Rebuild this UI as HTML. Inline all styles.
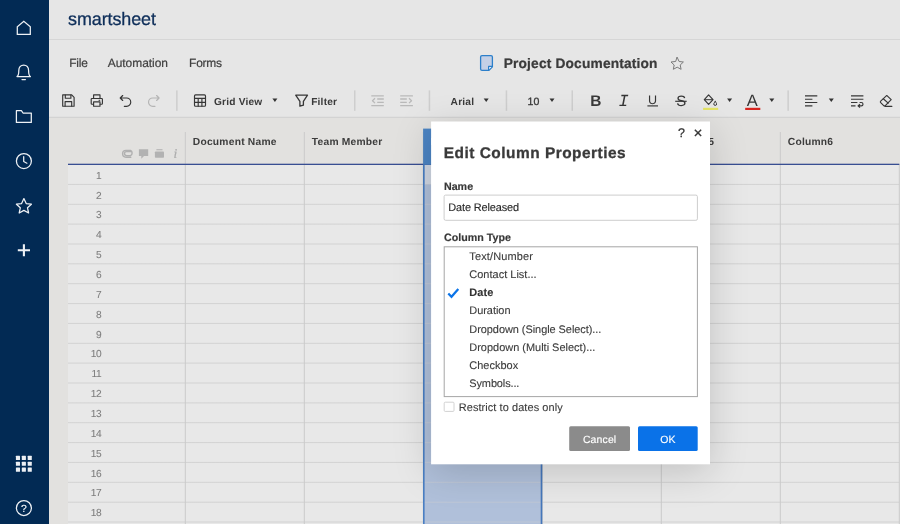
<!DOCTYPE html>
<html lang="en">
<head>
<meta charset="utf-8">
<title>Project Documentation - Smartsheet</title>
<style>
html{font-size:10px}
body{margin:0;width:900px;height:524px;overflow:hidden;background:#e6e6e6;font-family:"Liberation Sans",sans-serif}
#s{position:absolute;left:0;top:0;width:900rem;height:524rem;transform:scale(.1);transform-origin:0 0;overflow:hidden;will-change:transform}
#s div,#s span,#s svg{position:absolute;box-sizing:border-box}
#s{text-rendering:geometricPrecision}
.t{white-space:nowrap;line-height:1;color:#444}
.b{font-weight:bold}
/* chrome */
#side{left:0;top:0;width:49rem;height:524rem;background:#022a54}
#topline{left:49rem;top:39rem;width:851rem;height:1rem;background:#d6d6d6}
#tbline{left:49rem;top:116.8rem;width:851rem;height:1rem;background:#cbcbcb}
#gridbg{left:49rem;top:117.8rem;width:851rem;height:407rem;background:#e2e1df}
#rows{left:68rem;top:164.5rem;width:832rem;height:360rem;background:#e8e8e8}
.hl{left:68rem;width:831.3rem;height:1rem;background:linear-gradient(90deg,#d2d2d2 0,#d2d2d2 355rem,rgba(205,206,210,.5) 355rem,rgba(205,206,210,.5) 474.3rem,#d2d2d2 474.3rem)}
.vl{top:132rem;width:1rem;height:393rem;background:#cacaca}
#blue{left:68rem;top:163.7rem;width:831.3rem;height:1.25rem;background:#384e92}
.rn{left:71.3rem;width:30rem;text-align:right;font-size:10.2rem;letter-spacing:-.35rem;color:#7e7e7e;-webkit-text-stroke:.08rem #7e7e7e}
.ch{font-size:10.3rem;font-weight:bold;color:#3c3c3c;letter-spacing:.2rem}
.selb{top:164.8rem;width:1.6rem;height:360rem;background:#4a7fc3}
.sep{top:90.4rem;width:1.5rem;height:20.4rem;background:#cecece}
.tt{top:96.7rem;font-size:10.2rem;color:#3a3a3a;letter-spacing:.18rem}
.m{top:56.5rem;font-size:12rem;color:#404040;-webkit-text-stroke:.2rem #404040}
/* dialog */
.li{left:38.2rem;font-size:11rem;color:#3c3c3c;-webkit-text-stroke:.12rem #3c3c3c;letter-spacing:.05rem}
.bt{top:312.5rem;text-align:center;font-size:10.5rem;color:#fff;letter-spacing:.12rem;-webkit-text-stroke:.15rem #fff}
.lb{font-size:10.7rem;letter-spacing:.02rem;color:#383838;-webkit-text-stroke:.18rem #383838}
#dlg{left:431.1rem;top:121.5rem;width:278.9rem;height:342.8rem;background:#fff;box-shadow:0 8rem 36rem rgba(0,0,0,.17)}
</style>
</head>
<body>
<div id="s">
<div id="side"></div>
<svg id="sideic" style="left:0;top:0;width:49rem;height:524rem" viewBox="0 0 49 524" fill="none" stroke="#eef1f5" stroke-width="1.25" stroke-linejoin="round" stroke-linecap="round">
<path d="M17.3 34.3 V26.9 L23.8 21.3 L30.3 26.9 V34.3 Z" stroke-linejoin="miter"/>
<path d="M17 76.6 C18.6 75.4 18.8 73.4 18.8 70.4 C18.8 67.2 20.9 65 23.7 65 C26.5 65 28.6 67.2 28.6 70.4 C28.6 73.4 28.8 75.4 30.4 76.6 Z M22 79.6 H25.4"/>
<path d="M16.4 110.7 H21.4 L23 113 H31.3 V122.4 H16.4 Z"/>
<circle cx="23.9" cy="161.1" r="7.5"/>
<path d="M23.7 156.7 V161.5 L26.9 163.2"/>
<path d="M23.9 198.6 L26.2 203.6 L31.4 204.2 L27.5 207.8 L28.6 213 L23.9 210.4 L19.2 213 L20.3 207.8 L16.4 204.2 L21.6 203.6 Z"/>
<path d="M23.9 244.2 V256.2 M17.8 250.2 H30" stroke-width="2.1" stroke-linecap="butt"/>
<g fill="#eceff3" stroke="none">
<rect x="15.9" y="455.8" width="4.1" height="4.1" rx=".5"/><rect x="21.8" y="455.8" width="4.1" height="4.1" rx=".5"/><rect x="27.7" y="455.8" width="4.1" height="4.1" rx=".5"/>
<rect x="15.9" y="461.7" width="4.1" height="4.1" rx=".5"/><rect x="21.8" y="461.7" width="4.1" height="4.1" rx=".5"/><rect x="27.7" y="461.7" width="4.1" height="4.1" rx=".5"/>
<rect x="15.9" y="467.6" width="4.1" height="4.1" rx=".5"/><rect x="21.8" y="467.6" width="4.1" height="4.1" rx=".5"/><rect x="27.7" y="467.6" width="4.1" height="4.1" rx=".5"/>
</g>
<circle cx="23.9" cy="508" r="7.5"/>
</svg>
<div id="topline"></div>
<div class="t" id="logo" style="left:68rem;top:9.6rem;font-size:18rem;color:#0f2f5a;letter-spacing:-.12rem;-webkit-text-stroke:.3rem #0f2f5a">smartsheet</div>
<div class="t m" style="left:69.2rem;letter-spacing:-.22rem">File</div>
<div class="t m" style="left:107.7rem;letter-spacing:-.04rem">Automation</div>
<div class="t m" style="left:189.1rem;letter-spacing:-.28rem">Forms</div>
<div class="t b" id="title" style="left:503.7rem;top:56.2rem;font-size:13.8rem;letter-spacing:.14rem;color:#3b3b3b;-webkit-text-stroke:.25rem #3b3b3b">Project Documentation</div>
<div id="tbline"></div>
<div class="sep" style="left:176.1rem"></div>
<div class="sep" style="left:354rem"></div>
<div class="sep" style="left:428.7rem"></div>
<div class="sep" style="left:505.7rem"></div>
<div class="sep" style="left:571.5rem"></div>
<div class="sep" style="left:787.4rem"></div>
<div class="t b tt" style="left:214rem">Grid View</div>
<div class="t b tt" style="left:311.2rem">Filter</div>
<div class="t b tt" style="left:450.6rem">Arial</div>
<div class="t b tt" style="left:527.4rem;font-weight:normal;font-size:10.6rem;top:96.3rem;-webkit-text-stroke:.3rem #3a3a3a">10</div>
<div id="gridbg"></div>
<!--TB-->
<div id="rows"></div>
<div id="selc" style="left:423rem;top:164.8rem;width:119.3rem;height:360rem;background:rgba(60,110,190,.32)"></div>
<div id="selact" style="left:424.6rem;top:164.9rem;width:116.1rem;height:19.1rem;background:#d0d7e3"></div>
<div class="hl" style="top:183.90rem"></div>
<div class="hl" style="top:203.76rem"></div>
<div class="hl" style="top:223.62rem"></div>
<div class="hl" style="top:243.48rem"></div>
<div class="hl" style="top:263.34rem"></div>
<div class="hl" style="top:283.20rem"></div>
<div class="hl" style="top:303.06rem"></div>
<div class="hl" style="top:322.92rem"></div>
<div class="hl" style="top:342.78rem"></div>
<div class="hl" style="top:362.64rem"></div>
<div class="hl" style="top:382.50rem"></div>
<div class="hl" style="top:402.36rem"></div>
<div class="hl" style="top:422.22rem"></div>
<div class="hl" style="top:442.08rem"></div>
<div class="hl" style="top:461.94rem"></div>
<div class="hl" style="top:481.80rem"></div>
<div class="hl" style="top:501.66rem"></div>
<div class="hl" style="top:521.52rem"></div>
<div class="vl" style="left:184.8rem"></div>
<div class="vl" style="left:303.8rem"></div>
<div class="vl" style="left:422.8rem"></div>
<div class="vl" style="left:541.8rem"></div>
<div class="vl" style="left:660.8rem"></div>
<div class="vl" style="left:779.8rem"></div>
<div class="vl" style="left:898.8rem;top:164rem"></div>
<div id="blue"></div>
<div class="t rn" style="top:170.05rem">1</div>
<div class="t rn" style="top:189.91rem">2</div>
<div class="t rn" style="top:209.77rem">3</div>
<div class="t rn" style="top:229.63rem">4</div>
<div class="t rn" style="top:249.49rem">5</div>
<div class="t rn" style="top:269.35rem">6</div>
<div class="t rn" style="top:289.21rem">7</div>
<div class="t rn" style="top:309.07rem">8</div>
<div class="t rn" style="top:328.93rem">9</div>
<div class="t rn" style="top:348.79rem">10</div>
<div class="t rn" style="top:368.65rem">11</div>
<div class="t rn" style="top:388.51rem">12</div>
<div class="t rn" style="top:408.37rem">13</div>
<div class="t rn" style="top:428.23rem">14</div>
<div class="t rn" style="top:448.09rem">15</div>
<div class="t rn" style="top:467.95rem">16</div>
<div class="t rn" style="top:487.81rem">17</div>
<div class="t rn" style="top:507.67rem">18</div>
<div id="selh" style="left:423.1rem;top:128.6rem;width:119.2rem;height:36.2rem;background:#4c84c3"></div>
<div class="selb" style="left:423rem"></div>
<div class="selb" style="left:540.7rem;background:#4577bb"></div>
<div class="t ch" style="left:192.8rem;top:136.4rem">Document Name</div>
<div class="t ch" style="left:311.8rem;top:136.4rem">Team Member</div>
<div class="t ch" style="left:430.8rem;top:136.4rem;color:#fff">Date Released</div>
<div class="t ch" style="left:668.8rem;top:136.4rem">Column5</div>
<div class="t ch" style="left:787.8rem;top:136.4rem">Column6</div>
<svg id="tbic" style="left:0;top:0;width:900rem;height:524rem" viewBox="0 0 900 524" fill="none" stroke="#363636" stroke-width="1.15" stroke-linejoin="round" stroke-linecap="round">
<g id="docicon"><path d="M482 55.7 H491 Q492.4 55.700 492.400 57.100 V66.800 L489 70.300 H482 Q480.600 70.300 480.600 68.900 V57.100 Q480.600 55.700 482 55.700 Z" fill="#c4d0e6" stroke="#2c7fca" stroke-width="1.3"/><path d="M488.600 69.800 V66.400 H492" fill="#f4f6fa" stroke="#2c7fca" stroke-width="1.2"/></g>
<path id="favstar" d="M677.2 57.400 L679.100 61.500 L683.400 62 L680.200 65 L681.100 69.300 L677.200 67.200 L673.300 69.300 L674.200 65 L671 62 L675.300 61.500 Z" stroke="#7a7a7a" stroke-width="1"/>
<g id="save"><path d="M62.700 94.900 H71.700 L74.100 97.300 V106.200 H62.700 Z"/><path d="M65.300 95 V98.200 H70.900 V95"/><path d="M65.100 106.100 V101.600 H71.700 V106.100"/></g>
<g id="print"><path d="M93.600 98.400 V94.900 H100 V98.400"/><path d="M93.400 104.200 H91.900 Q91.200 104.200 91.200 103.500 V99.300 Q91.200 98.500 92 98.500 H101.600 Q102.400 98.500 102.400 99.300 V103.500 Q102.400 104.200 101.700 104.200 H100.200"/><path d="M93.600 101.900 H100 V106.200 H93.600 Z"/><path d="M99 100.300 H99.800" stroke-width="1"/></g>
<path id="undo" d="M122.700 95.500 L120.200 98 L122.700 100.500 M120.400 98 H126.600 A4.150 4.150 0 0 1 126.600 106.300 H124.300"/>
<path id="redo" d="M156.600 95.500 L159.100 98 L156.600 100.500 M158.900 98 H152.700 A4.150 4.150 0 0 0 152.700 106.300 H155" stroke="#b4b4b4"/>
<g id="gridic"><rect x="194.500" y="94.900" width="11" height="11.300" rx="1"/><path d="M194.500 98.300 H205.500 M194.500 102.300 H205.500 M198.200 98.300 V106.200 M201.900 98.300 V106.200"/></g>
<path id="funnel" d="M295.700 95.200 H307.500 L303.400 101.300 V105.200 L299.900 106.200 V101.300 Z" stroke-width="1.3"/>
<g id="outdent" stroke="#b9b9b9" stroke-width="1.3" stroke-linecap="butt"><path d="M371.300 95.800 H383.800 M377.200 99 H383.800 M377.200 102.300 H383.800 M371.300 105.600 H383.800 M375 98.300 L372.500 100.700 L375 103.100"/></g>
<g id="indent" stroke="#b9b9b9" stroke-width="1.3" stroke-linecap="butt"><path d="M400.200 95.800 H412.900 M400.200 99 H406.800 M400.200 102.300 H406.800 M400.200 105.600 H412.900 M409 98.300 L411.500 100.700 L409 103.100"/></g>
<path id="underline" d="M647.4 105.9 H658" stroke-linecap="butt"/>
<path id="strike" d="M675.2 101.3 H686.7" stroke-linecap="butt"/>
<g id="fill"><path d="M708.600 94.900 L713 99.600 L708.600 104.400 L704.300 99.600 Z"/><path d="M704.600 99.700 H712.700" stroke-width="1"/><path d="M715.200 101.500 C716.200 102.800 716.600 103.400 716.600 104 A1.400 1.400 0 0 1 713.800 104 C713.800 103.400 714.200 102.800 715.200 101.500 Z" stroke-width="1"/></g>
<rect x="703.100" y="107.800" width="15.100" height="2.200" fill="#e4e465" stroke="none"/>
<rect x="745.200" y="107.800" width="15.100" height="2.200" fill="#d8251f" stroke="none"/>
<g id="align" stroke-linecap="butt"><path d="M805 95.900 H817.300 M805 99.200 H812.400 M805 102.500 H817.300 M805 105.900 H812.400"/></g>
<g id="wrap" stroke-linecap="butt"><path d="M851 95.900 H863.400 M851 99.200 H863.400 M851 102.5 H857.4 M859.6 102.5 H861.3 A1.7 1.7 0 0 1 861.3 105.9 H858.5 M851 105.900 H855.500 M860 104.200 L858 105.900 L860 107.600"/></g>
<g id="eraser"><path d="M887.200 95.800 L891.200 99.600 L885.300 105.600 Q884.500 106.300 883.700 105.600 L880.700 102.700 Q879.900 101.900 880.700 101.100 L886.300 95.800 Q886.750 95.400 887.200 95.800 Z"/><path d="M883.300 98.700 L888.200 103.100"/><path d="M885 106.300 H891.900"/></g>
<g id="carets" fill="#333" stroke="none"><path d="M272.4 98.6 H277.4 L274.9 102.1 Z"/><path d="M483.7 98.6 H488.7 L486.2 102.1 Z"/><path d="M549.5 98.6 H554.5 L552.0 102.1 Z"/><path d="M727.1 98.6 H732.1 L729.6 102.1 Z"/><path d="M769.3 98.6 H774.3 L771.8 102.1 Z"/><path d="M828.8 98.6 H833.8 L831.3 102.1 Z"/></g>
<g id="hdric" fill="#b2b2b2" stroke="none"><path d="M138.900 149.200 H148.200 V156 H144 L141.300 158.800 V156 H138.900 Z"/><rect x="154.900" y="151.400" width="9.100" height="6.300" rx=".8"/><rect x="156.400" y="149.200" width="6.100" height="1.100"/></g>
<path id="clip" d="M131 151.600 H126.500 A2 2 0 0 0 126.500 155.600 H130.500 A2.900 2.900 0 0 0 130.500 150.400 H126 A3.400 3.400 0 0 0 126 157.200 H130.800" stroke="#b0b0b0" stroke-width="1.4"/>
</svg>
<div class="t b" style="left:590.2rem;top:93rem;font-size:15.5rem;color:#3a3a3a">B</div>
<div class="t" id="icI" style="left:618.6rem;top:92.8rem;font-size:17rem;color:#363636;font-style:italic;font-family:'Liberation Mono',monospace">I</div>
<div class="t" id="icU" style="left:648.1rem;top:93.4rem;font-size:12.6rem;color:#363636">U</div>
<div class="t" id="icS" style="left:676.2rem;top:93rem;font-size:15rem;color:#363636">S</div>
<div class="t" id="icA" style="left:746.7rem;top:92.1rem;font-size:16.6rem;color:#363636">A</div>
<div class="t" id="icQ" style="left:21rem;top:503.2rem;font-size:10.4rem;color:#eef1f5;-webkit-text-stroke:.2rem #eef1f5">?</div>
<div class="t" style="left:173.6rem;top:146.6rem;font-size:13.5rem;color:#adadad;font-style:italic;font-family:'Liberation Serif',serif;-webkit-text-stroke:.2rem #adadad">i</div>
<div id="dlg">
<div class="t" style="left:246.8rem;top:4.8rem;font-size:12.5rem;color:#333;-webkit-text-stroke:.3rem #333">?</div>
<div class="t" id="dlgx" style="left:262.5rem;top:3.6rem;font-size:15.5rem;color:#333;-webkit-text-stroke:.25rem #333">×</div>
<div class="t b" style="left:12.7rem;top:23.6rem;font-size:15.5rem;letter-spacing:.46rem;color:#3a3a3a;-webkit-text-stroke:.3rem #3a3a3a">Edit Column Properties</div>
<div class="t b lb" style="left:12.8rem;top:59.1rem">Name</div>
<div style="left:12.5rem;top:73.1rem;width:254.3rem;height:26.2rem;border:1rem solid #cdcdcd;border-radius:2rem;background:#fff"></div>
<div class="t" style="left:17.2rem;top:80.2rem;font-size:11rem;color:#2a2a2a;letter-spacing:-.17rem;-webkit-text-stroke:.12rem #2a2a2a">Date Released</div>
<div class="t b lb" style="left:12.8rem;top:110.6rem">Column Type</div>
<div style="left:12.6rem;top:124.8rem;width:254.2rem;height:150.8rem;border:1rem solid #a6a6a6;background:#fff"></div>
<div class="t li" style="top:128.79rem;letter-spacing:0.12rem">Text/Number</div>
<div class="t li" style="top:147.06rem;letter-spacing:0.00rem">Contact List...</div>
<div class="t li b" style="top:165.33rem;color:#333">Date</div>
<div class="t li" style="top:183.60rem;letter-spacing:-0.05rem">Duration</div>
<div class="t li" style="top:201.87rem;letter-spacing:-0.07rem">Dropdown (Single Select)...</div>
<div class="t li" style="top:220.14rem;letter-spacing:-0.02rem">Dropdown (Multi Select)...</div>
<div class="t li" style="top:238.41rem;letter-spacing:0.00rem">Checkbox</div>
<div class="t li" style="top:256.68rem;letter-spacing:-0.14rem">Symbols...</div>
<svg style="left:15.2rem;top:165.7rem;width:14rem;height:12rem" viewBox="0 0 14 12"><path d="M2 6.2 L5.2 9.6 L12 1.8" stroke="#0b74e8" stroke-width="2.2" fill="none"/></svg>
<div style="left:12.6rem;top:280.2rem;width:10.8rem;height:10.2rem;border:1rem solid #d2d2d2;border-radius:1.5rem;background:#fff"></div>
<div class="t" style="left:27.6rem;top:280.6rem;font-size:11rem;color:#3c3c3c;letter-spacing:.06rem;-webkit-text-stroke:.1rem #3c3c3c">Restrict to dates only</div>
<div style="left:138.1rem;top:304.7rem;width:60.8rem;height:24.7rem;background:#8b8b8b;border-radius:1.5rem"></div>
<div class="t bt" style="left:138.1rem;width:60.8rem">Cancel</div>
<div style="left:206.9rem;top:304.7rem;width:59.7rem;height:24.7rem;background:#0a72e8;border-radius:1.5rem"></div>
<div class="t bt" style="left:206.9rem;width:59.7rem">OK</div>
</div>
</div>
</body>
</html>
